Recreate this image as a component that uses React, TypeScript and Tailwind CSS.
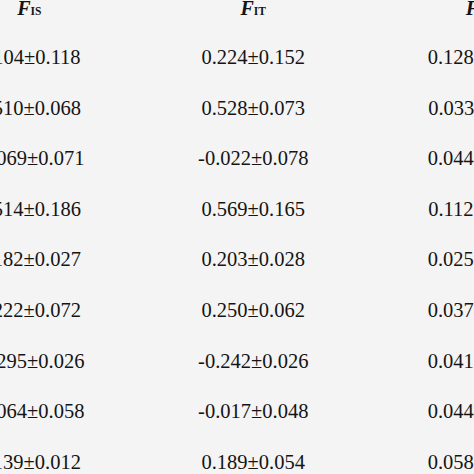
const rows = [
  ['0.104±0.118', '0.224±0.152', '0.128±0.052'],
  ['0.510±0.068', '0.528±0.073', '0.033±0.011'],
  ['-0.069±0.071', '-0.022±0.078', '0.044±0.015'],
  ['0.514±0.186', '0.569±0.165', '0.112±0.048'],
  ['0.182±0.027', '0.203±0.028', '0.025±0.006'],
  ['0.222±0.072', '0.250±0.062', '0.037±0.013'],
  ['-0.295±0.026', '-0.242±0.026', '0.041±0.007'],
  ['-0.064±0.058', '-0.017±0.048', '0.044±0.012'],
  ['0.139±0.012', '0.189±0.054', '0.058±0.021'],
];

const heads = ['IS', 'IT', 'ST'];

export default function App() {
  return (
    <div className="w-[474px] h-[474px] overflow-hidden bg-[#f4f4f4] text-[#141414] font-['Liberation_Serif',serif]">
      <div className="ml-[-82.5px] mt-[-12px] w-[680px]">
        <div className="grid grid-cols-[223.5px_224.5px_228px] h-[44px] leading-[41px]">
          {heads.map((h) => (
            <div key={h} className="text-center whitespace-nowrap">
              <span className="font-bold italic text-[20px]">F</span>
              <span className="font-bold text-[11.5px]">{h}</span>
            </div>
          ))}
        </div>
        {rows.map((r, i) => (
          <div key={i} className="grid grid-cols-[223.5px_224.5px_228px] h-[50.6px] leading-[50.6px] text-[20.5px]">
            {r.map((v, j) => (
              <div key={j} className="text-center whitespace-nowrap">
                {v}
              </div>
            ))}
          </div>
        ))}
      </div>
    </div>
  );
}
